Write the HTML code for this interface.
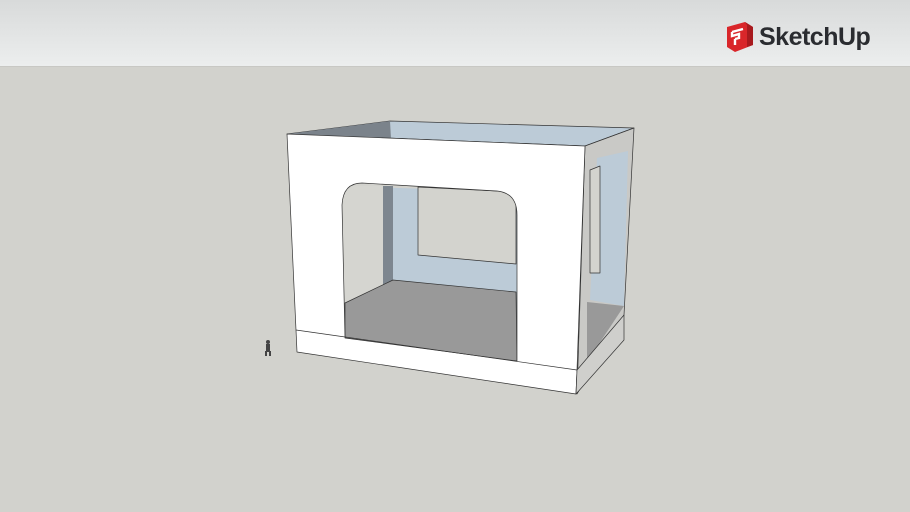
<!DOCTYPE html>
<html><head><meta charset="utf-8"><style>
html,body{margin:0;padding:0;width:910px;height:512px;overflow:hidden;background:#d2d2cd;font-family:"Liberation Sans",sans-serif}
.hdr{position:absolute;left:0;top:0;width:910px;height:66px;background:linear-gradient(#d8dada,#eceeee);border-bottom:1px solid #c8c8c4}
.logo{position:absolute;left:725px;top:21px;display:flex;align-items:center}
.logo span{font-weight:bold;font-size:25px;color:#2a2c30;letter-spacing:-0.5px;margin-left:4px}
</style></head><body>
<div class="hdr"><div class="logo">
<svg width="30" height="32" viewBox="0 0 30 32"><polygon points="2,6 20,1 28,6 28,24 10,31 2,26" fill="#d9262a"/><polygon points="20,1 28,6 28,24 22,26 22,4" fill="#a81a1e"/><path d="M7,11 L18,8 M7,11 L7,15 L14,13 L14,17 L10,18 M10,18 L10,24" stroke="#fff" stroke-width="2.4" fill="none"/></svg>
<span>SketchUp</span></div></div>
<svg width="910" height="512" style="position:absolute;left:0;top:0">
<g stroke="#333" stroke-width="0.7" stroke-linejoin="round">
<polygon points="287,134 390,121 634,128 585,146" fill="#bccbd7"/>
<polygon points="287,134 390,121 391,139" fill="#7b838b" stroke="none"/>
<polygon points="342,186 520,192 520,365 342,340" fill="#bccbd7" stroke="none"/>
<polygon points="342,186 384,186 384,290 342,310" fill="#d5d5d0" stroke="none"/>
<polygon points="383,186 393,186 393,281 383,286" fill="#7d868f" stroke="none"/>
<polygon points="418,187 516,192 516,264 418,255" fill="#d3d3ce"/>
<polygon points="345,303 393,280 516,292 517,362 345,338" fill="#999"/>
<polygon points="585,146 634,128 624,315 577,394" fill="#c9c9c6"/>
<polygon points="597,158 628,151 624,306 590,300" fill="#bccbd7" stroke="none"/>
<polygon points="590,170 600,166 600,273 590,273" fill="#d3d3ce"/>
<polygon points="587,302 624,306 587,362" fill="#999" stroke="none"/>
<path fill-rule="evenodd" fill="#fff" d="M287,134 L585,146 L577,370 L576,394 L297,352 L296,330 Z M345,338 L342,205 Q343,183 362,183 L497,191 Q517,193 517,215 L517,361 Z"/>
<line x1="296" y1="330" x2="577" y2="370"/>
<polygon points="577,370 624,315 624,340 576,394" fill="#cfcfcc"/>
</g>
<g fill="#444"><circle cx="268" cy="342" r="2"/><rect x="266" y="344" width="4" height="8"/><rect x="265" y="351" width="2" height="5"/><rect x="269" y="351" width="2" height="5"/></g>
</svg>
</body></html>
